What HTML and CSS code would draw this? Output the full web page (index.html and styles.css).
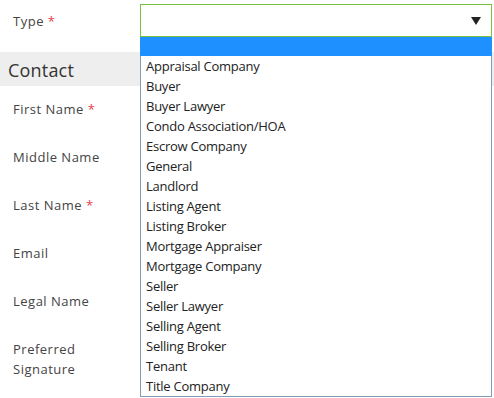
FILE: index.html
```html
<!DOCTYPE html>
<html>
  <head>
    <link rel="stylesheet" href="styles.css">
  </head>
  <body>
    <div class="form">
      <div class="row type-row">
        <label class="label">Type <span class="req">*</span></label>
        <div class="select-wrap">
          <div class="select">
            <svg class="arrow" width="10" height="8" viewBox="0 0 10 8"><path d="M0 0 L10 0 L5 8 Z" fill="#222"/></svg>
          </div>
          <ul class="dropdown">
            <li class="selected">&nbsp;</li>
            <li>Appraisal Company</li>
            <li>Buyer</li>
            <li>Buyer Lawyer</li>
            <li>Condo Association/HOA</li>
            <li>Escrow Company</li>
            <li>General</li>
            <li>Landlord</li>
            <li>Listing Agent</li>
            <li>Listing Broker</li>
            <li>Mortgage Appraiser</li>
            <li>Mortgage Company</li>
            <li>Seller</li>
            <li>Seller Lawyer</li>
            <li>Selling Agent</li>
            <li>Selling Broker</li>
            <li>Tenant</li>
            <li>Title Company</li>
          </ul>
        </div>
      </div>

      <div class="section">Contact</div>

      <div class="row"><label class="label">First Name <span class="req">*</span></label></div>
      <div class="row"><label class="label">Middle Name</label></div>
      <div class="row"><label class="label">Last Name <span class="req">*</span></label></div>
      <div class="row"><label class="label">Email</label></div>
      <div class="row"><label class="label">Legal Name</label></div>
      <div class="row"><label class="label">Preferred<br>Signature</label></div>
    </div>
  </body>
</html>
```

FILE: styles.css
```css
body {
  margin: 0;
  background: #fff;
  font-family: "Open Sans", sans-serif;
  color: #333;
}

.form {
  width: 494px;
  min-height: 398px;
}

.row {
  display: grid;
  grid-template-columns: 140px 352px;
  align-items: start;
  height: 48px;
}

.row .label {
  padding-top: 13px;
}

.label {
  padding-left: 13px;
  font-size: 13px;
  letter-spacing: 0.5px;
  line-height: 20px;
  color: #444;
}

.req {
  color: #e8414b;
}

.type-row {
  height: 33px;
  padding-top: 4px;
  margin-bottom: 15px;
  align-items: center;
}

.type-row .label {
  padding-top: 0;
}

.select-wrap {
  position: relative;
  height: 33px;
}

.select {
  box-sizing: border-box;
  height: 33px;
  border: 1px solid #7ac143;
  display: flex;
  align-items: center;
  justify-content: flex-end;
  padding-right: 10px;
}

.dropdown {
  position: absolute;
  top: 33px;
  left: 0;
  width: 352px;
  box-sizing: border-box;
  margin: 0;
  padding: 0;
  list-style: none;
  background: #fff;
  border: 1px solid #7f9db9;
  border-top: none;
  z-index: 2;
}

.dropdown li {
  height: 20px;
  line-height: 20px;
  padding-left: 5px;
  font-size: 13px;
  letter-spacing: -0.25px;
  color: #222;
  white-space: nowrap;
}

.dropdown li.selected {
  height: 19px;
  background: #1e90ff;
  margin: 0 -1px;
}

.section {
  height: 34px;
  line-height: 36px;
  background: #eee;
  padding-left: 8px;
  font-size: 18px;
  letter-spacing: 0.2px;
  color: #333;
}
```
